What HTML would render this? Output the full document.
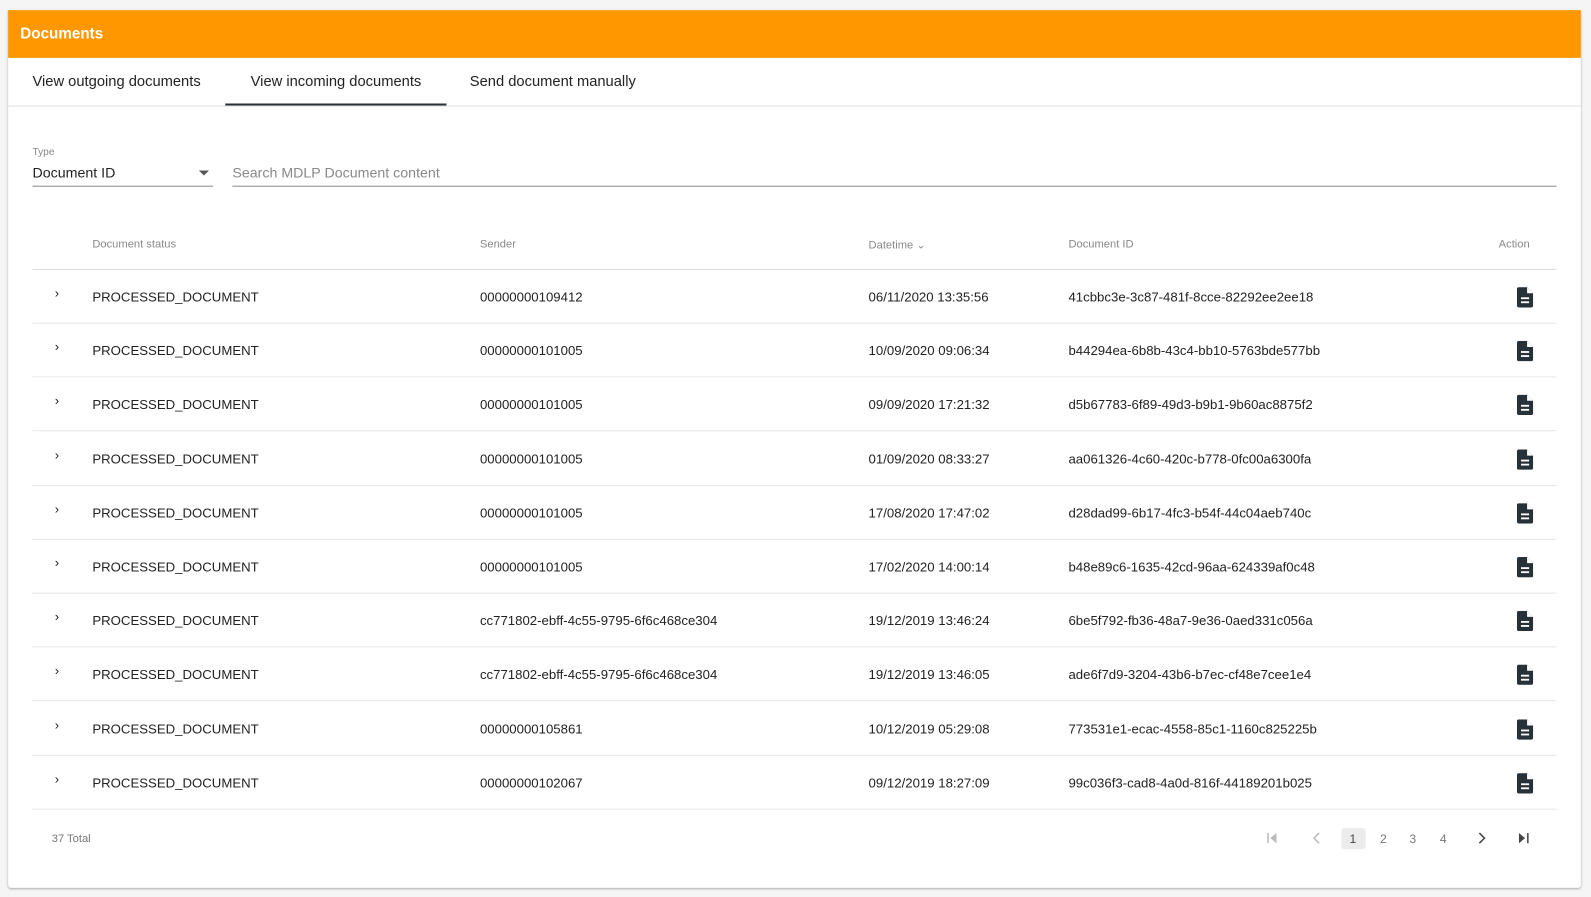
<!DOCTYPE html>
<html><head><meta charset="utf-8"><style>
*{box-sizing:border-box;margin:0;padding:0}
body{width:1591px;height:897px;background:#f5f5f5;font-family:"Liberation Sans",sans-serif;color:#222;position:relative;overflow:hidden}
#wrap{position:absolute;left:0;top:0;width:1568px;height:884px;transform:scale(1.01467);transform-origin:0 0}
.card{position:absolute;left:8px;top:10px;width:1550px;height:865px;background:#fff;box-shadow:0 1px 2px rgba(0,0,0,.3);border-radius:0 0 3px 3px}
.hdr{height:47px;background:#ff9800;color:#fff;font-weight:bold;font-size:15px;padding:15px 0 0 12px}
.tabs{height:48px;border-bottom:1px solid #e0e0e0;position:relative;font-size:14.5px}
.tab{position:absolute;top:16px}
.ul{position:absolute;left:214px;top:45px;width:218px;height:2px;background:#263238}
.abs{position:absolute}
.row{position:absolute;left:24px;width:1502px;height:53px;border-bottom:1px solid #e6e6e6;font-size:13px;color:#222}
.row span{position:absolute;top:19px}
.th{position:absolute;top:225px;font-size:11px;color:#888}
.pg{position:absolute;top:810px;font-size:12px;color:#777}
</style></head><body><div id="wrap">
<div class="card">
<div class="hdr">Documents</div>
<div class="tabs">
<div class="tab" style="left:24px">View outgoing documents</div>
<div class="tab" style="left:239px">View incoming documents</div>
<div class="tab" style="left:455px">Send document manually</div>
<div class="ul"></div>
</div>
<div class="abs" style="left:24px;top:135px;font-size:10px;color:#888">Type</div>
<div class="abs" style="left:24px;top:152px;font-size:14px">Document ID</div>
<div class="abs" style="left:188px;top:158px;width:0;height:0;border-left:5px solid transparent;border-right:5px solid transparent;border-top:5px solid #555"></div>
<div class="abs" style="left:24px;top:173px;width:178px;height:1px;background:#888"></div>
<div class="abs" style="left:221px;top:152px;font-size:14px;color:#888">Search MDLP Document content</div>
<div class="abs" style="left:221px;top:173px;width:1305px;height:1px;background:#888"></div>
<div class="th" style="left:83px">Document status</div>
<div class="th" style="left:465px">Sender</div>
<div class="th" style="left:848px">Datetime ⌄</div>
<div class="th" style="left:1045px">Document ID</div>
<div class="th" style="left:1469px">Action</div>
<div class="abs" style="left:24px;top:255px;width:1502px;height:1px;background:#ddd"></div>
<div id="rows"></div>
<div class="abs" style="left:43px;top:811px;font-size:11px;color:#777">37 Total</div>
<svg class="abs" style="left:1240px;top:810px" width="12" height="12"><rect x="1" y="1" width="1.5" height="10" fill="#bbb"/><path d="M10 1L4 6l6 5z" fill="#bbb"/></svg>
<svg class="abs" style="left:1285px;top:810px" width="10" height="12"><path d="M7 1L2 6l5 5" stroke="#bbb" stroke-width="1.5" fill="none"/></svg>
<div class="abs" style="left:1314px;top:806px;width:24px;height:21px;background:#ececec;border-radius:3px"></div>
<div class="pg" style="left:1322px;color:#444">1</div>
<div class="pg" style="left:1352px">2</div>
<div class="pg" style="left:1381px">3</div>
<div class="pg" style="left:1411px">4</div>
<svg class="abs" style="left:1447px;top:810px" width="10" height="12"><path d="M3 1l5 5-5 5" stroke="#444" stroke-width="1.5" fill="none"/></svg>
<svg class="abs" style="left:1488px;top:810px" width="12" height="12"><path d="M1 1l6 5-6 5z" fill="#444"/><rect x="9" y="1" width="1.5" height="10" fill="#444"/></svg>
</div></div>
<script>
var d=[["00000000109412","06/11/2020 13:35:56","41cbbc3e-3c87-481f-8cce-82292ee2ee18"],
["00000000101005","10/09/2020 09:06:34","b44294ea-6b8b-43c4-bb10-5763bde577bb"],
["00000000101005","09/09/2020 17:21:32","d5b67783-6f89-49d3-b9b1-9b60ac8875f2"],
["00000000101005","01/09/2020 08:33:27","aa061326-4c60-420c-b778-0fc00a6300fa"],
["00000000101005","17/08/2020 17:47:02","d28dad99-6b17-4fc3-b54f-44c04aeb740c"],
["00000000101005","17/02/2020 14:00:14","b48e89c6-1635-42cd-96aa-624339af0c48"],
["cc771802-ebff-4c55-9795-6f6c468ce304","19/12/2019 13:46:24","6be5f792-fb36-48a7-9e36-0aed331c056a"],
["cc771802-ebff-4c55-9795-6f6c468ce304","19/12/2019 13:46:05","ade6f7d9-3204-43b6-b7ec-cf48e7cee1e4"],
["00000000105861","10/12/2019 05:29:08","773531e1-ecac-4558-85c1-1160c825225b"],
["00000000102067","09/12/2019 18:27:09","99c036f3-cad8-4a0d-816f-44189201b025"]];
var h="";d.forEach(function(r,i){var t=256+i*53.2;
h+='<div class="row" style="top:'+t+'px"><span style="left:22px;top:15px;font-size:13px">›</span><span style="left:59px">PROCESSED_DOCUMENT</span><span style="left:441px">'+r[0]+'</span><span style="left:824px">'+r[1]+'</span><span style="left:1021px">'+r[2]+'</span><svg style="position:absolute;left:1463px;top:17px" width="16" height="20" viewBox="0 0 16 20"><path d="M2 0h8l6 6v12a2 2 0 0 1-2 2H2a2 2 0 0 1-2-2V2a2 2 0 0 1 2-2z" fill="#263238"/><path d="M10 0l6 6h-6z" fill="#fff"/><rect x="4" y="10" width="8" height="1.8" fill="#fff"/><rect x="4" y="14" width="8" height="1.8" fill="#fff"/></svg></div>';});
document.getElementById("rows").innerHTML=h;
</script>
</body></html>
